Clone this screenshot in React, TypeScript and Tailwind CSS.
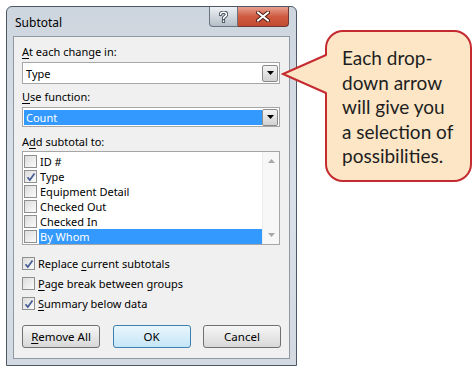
import React from "react";

const ui = { fontFamily: '"Noto Sans", "Open Sans", sans-serif' };
const callFont = { fontFamily: 'Lato, "Open Sans", sans-serif' };

function Check({ on }: { on?: boolean }) {
  return (
    <span className="flex h-[13px] w-[13px] shrink-0 items-center justify-center border border-[#8e8f8f] bg-gradient-to-br from-[#dcdcdc] to-[#fbfbfb]">
      {on && (
        <svg width="10" height="10" viewBox="0 0 10 10">
          <path d="M1.5 5.2 L3.8 8 L8.5 1.5" fill="none" stroke="#4a5f97" strokeWidth="1.8" />
        </svg>
      )}
    </span>
  );
}

function DropBtn() {
  return (
    <span className="flex h-[17px] w-[16px] items-center justify-center rounded-[2px] border border-[#8a8a8a] bg-gradient-to-b from-[#f4f4f4] to-[#d2d2d2]">
      <svg width="7" height="4" viewBox="0 0 7 4">
        <path d="M0 0 H7 L3.5 4 Z" fill="#000" />
      </svg>
    </span>
  );
}

function U({ c }: { c: string }) {
  return <span className="underline underline-offset-2">{c}</span>;
}

function Btn({ children, def }: { children: React.ReactNode; def?: boolean }) {
  return (
    <button
      className={
        "flex h-[23px] w-[78px] items-center justify-center rounded-[3px] border text-[11.5px] text-black " +
        (def
          ? "border-[#3c7fb1] bg-gradient-to-b from-[#eaf6fd] to-[#c4e5f6]"
          : "border-[#707070] bg-gradient-to-b from-[#f6f6f6] to-[#d8d8d8]")
      }
      style={ui}
    >
      {children}
    </button>
  );
}

const items = ["ID #", "Type", "Equipment Detail", "Checked Out", "Checked In", "By Whom"];

export default function App() {
  return (
    <div className="relative h-[373px] w-[474px] overflow-hidden bg-white">
      <div className="pl-[6px] pt-[6px]">
        {/* window frame */}
        <div className="flex h-[360px] w-[291px] flex-col rounded-t-[6px] border border-[#4e5763] bg-gradient-to-b from-[#cdd5de] via-[#dbe1e8] to-[#d2d9e0] px-[6px] pb-[6px]" style={ui}>
          <div className="flex h-[29px] items-start justify-between">
            <span className="pl-[2px] pt-[9px] text-[12px] leading-[14px] text-black">Subtotal</span>
            <div className="flex pr-[1px]">
              <span className="flex h-[20px] w-[29px] items-center justify-center rounded-bl-[4px] border border-t-0 border-[#6b7480] bg-gradient-to-b from-[#eef1f4] to-[#b5bec8]">
                <svg width="9" height="12" viewBox="0 0 9 12">
                  <path d="M1.5 3.5 C1.5 0.5 7.5 0.5 7.5 3.5 C7.5 5.5 4.5 5.5 4.5 7.5 M4.5 10 V10.5" fill="none" stroke="#3e4650" strokeWidth="3.4" strokeLinecap="round" />
                  <path d="M1.5 3.5 C1.5 0.5 7.5 0.5 7.5 3.5 C7.5 5.5 4.5 5.5 4.5 7.5 M4.5 10 V10.5" fill="none" stroke="#fff" strokeWidth="1.6" strokeLinecap="round" />
                </svg>
              </span>
              <span className="flex h-[20px] w-[51px] items-center justify-center rounded-br-[4px] border border-l-0 border-t-0 border-[#6b3a32] bg-gradient-to-b from-[#e6a08f] via-[#cf5b41] to-[#c24a2e]">
                <svg width="14" height="11" viewBox="0 0 14 11">
                  <path d="M2 1.5 L12 9.5 M12 1.5 L2 9.5" stroke="#4a1c12" strokeWidth="4" strokeLinecap="round" />
                  <path d="M2 1.5 L12 9.5 M12 1.5 L2 9.5" stroke="#fff" strokeWidth="2.2" strokeLinecap="round" />
                </svg>
              </span>
            </div>
          </div>

          {/* client area */}
          <div className="flex flex-1 flex-col border border-[#8f98a3] bg-[#f0f0f0] px-[8px] pt-[7px] text-[11px] leading-[15px] text-black">
            <div>
              <U c="A" />t each change in:
            </div>
            <div className="mt-[3px] flex h-[22px] w-[258px] items-center justify-between border border-[#a6a6a6] bg-white pl-[3px] pr-[1px]">
              <span>Type</span>
              <DropBtn />
            </div>

            <div className="mt-[5px]">
              <U c="U" />se function:
            </div>
            <div className="mt-[3px] flex h-[20px] w-[258px] items-center justify-between border border-[#a6a6a6] bg-white pl-[1px] pr-[1px]">
              <span className="flex h-[15px] w-[238px] items-center bg-[#3399ff] pl-[2px] text-white">Count</span>
              <DropBtn />
            </div>

            <div className="mt-[7px]">
              A<U c="d" />d subtotal to:
            </div>
            <div className="mt-[2px] flex h-[94px] w-[258px] border border-[#a6a6a6] bg-white">
              <div className="flex flex-1 flex-col pl-[1px] pt-[2px]">
                {items.map((t, i) => (
                  <div key={t} className="flex h-[15px] items-center gap-[2px] leading-[13px]">
                    <Check on={i === 1} />
                    <span className={"flex h-[15px] flex-1 items-center pl-[1px] " + (i === 5 ? "bg-[#3399ff] text-white" : "")}>{t}</span>
                  </div>
                ))}
              </div>
              <div className="flex w-[17px] flex-col items-center justify-between border-l border-[#ececec] bg-[#f7f7f7] py-[7px]">
                <svg width="7" height="4" viewBox="0 0 7 4">
                  <path d="M0 4 H7 L3.5 0 Z" fill="#a8a8a8" />
                </svg>
                <svg width="7" height="4" viewBox="0 0 7 4">
                  <path d="M0 0 H7 L3.5 4 Z" fill="#a8a8a8" />
                </svg>
              </div>
            </div>

            <div className="mt-[12px] flex flex-col gap-[7px]">
              <div className="flex h-[13px] items-center gap-[3px]">
                <Check on />
                <span>
                  Replace <U c="c" />urrent subtotals
                </span>
              </div>
              <div className="flex h-[13px] items-center gap-[3px]">
                <Check />
                <span>
                  <U c="P" />age break between groups
                </span>
              </div>
              <div className="flex h-[13px] items-center gap-[3px]">
                <Check on />
                <span>
                  <U c="S" />ummary below data
                </span>
              </div>
            </div>

            <div className="mt-[15px] flex w-[259px] justify-between">
              <Btn>
                <U c="R" />emove All
              </Btn>
              <Btn def>OK</Btn>
              <Btn>Cancel</Btn>
            </div>
          </div>
        </div>
      </div>

      {/* callout annotation */}
      <div className="absolute left-[325px] top-[30px] h-[152px] w-[147px] rounded-[18px] border-2 border-[#c52a2f] bg-[#fce6c6] pl-[15px] pt-[14px] text-[19px] leading-[24.5px] text-[#1e1e1e]" style={callFont}>
        Each drop-
        <br />
        down arrow
        <br />
        will give you
        <br />
        a selection of
        <br />
        possibilities.
      </div>
      <svg className="absolute left-[281px] top-[50px]" width="48" height="48" viewBox="0 0 48 48">
        <polygon points="47,5 2,24 47,43" fill="#fce6c6" />
        <polyline points="45,5 2,24 45,43" fill="none" stroke="#c52a2f" strokeWidth="2" strokeLinejoin="miter" />
      </svg>
    </div>
  );
}
